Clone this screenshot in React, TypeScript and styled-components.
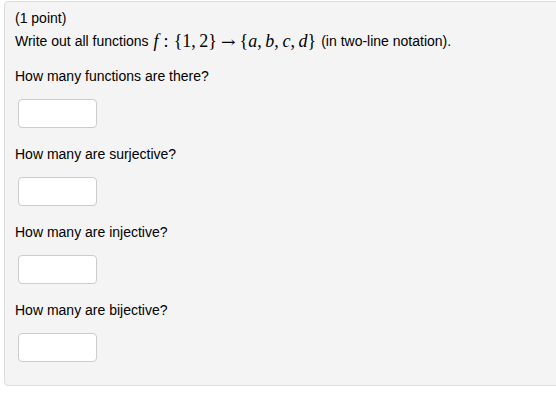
import React from "react";
import styled, { createGlobalStyle } from "styled-components";

const GlobalStyle = createGlobalStyle`
  body {
    margin: 0;
    background: #ffffff;
    font-family: "Liberation Sans", Arial, sans-serif;
    font-size: 14px;
    color: #000;
    overflow: hidden;
  }
`;

const Panel = styled.div`
  margin: 1px -20px 0 4px;
  padding: 9px 10px 23px 10px;
  background: #f4f4f4;
  border: 1px solid #dcdcdc;
  border-radius: 4px;
`;

const Line = styled.div`
  line-height: 15px;
`;

const ProblemLine = styled.div`
  display: flex;
  align-items: center;
  height: 22px;
  margin-top: 4px;
  white-space: nowrap;
`;

const Math = styled.span`
  font-family: "Liberation Serif", "Times New Roman", serif;
  font-size: 18px;
  margin: 0 5px 0 5px;
  display: inline-flex;
  align-items: baseline;
  white-space: pre;
`;

const Var = styled.i`
  font-style: italic;
`;

const Op = styled.span<{ $gap?: number }>`
  margin: 0 ${(p) => p.$gap ?? 4}px;
`;

const Arrow = styled.span`
  font-family: "DejaVu Serif", serif;
  font-size: 15px;
  margin: 0 5px;
  transform: scaleX(1.15);
  display: inline-block;
`;

const Question = styled.div<{ $top: number }>`
  line-height: 16px;
  margin-top: ${(p) => p.$top}px;
`;

const Answer = styled.input`
  display: block;
  margin: 15px 0 0 3px;
  width: 79px;
  height: 29px;
  box-sizing: border-box;
  border: 1px solid #cccccc;
  border-radius: 4px;
  background: #fff;
  outline: none;
`;

const questions = [
  "How many functions are there?",
  "How many are surjective?",
  "How many are injective?",
  "How many are bijective?",
];

const thin = "\u2009";

export default function App() {
  return (
    <>
      <GlobalStyle />
      <Panel>
        <Line>(1 point)</Line>
        <ProblemLine>
          Write out all functions
          <Math>
            <Var>f</Var>
            <Op $gap={5}>:</Op>
            {`{1,${thin}2}`}
            <Arrow>→</Arrow>
            {"{"}
            <Var>a</Var>,{thin}
            <Var>b</Var>,{thin}
            <Var>c</Var>,{thin}
            <Var>d</Var>
            {"}"}
          </Math>
          (in two-line notation).
        </ProblemLine>
        {questions.map((q, i) => (
          <React.Fragment key={q}>
            <Question $top={i === 0 ? 16 : 18}>{q}</Question>
            <Answer type="text" />
          </React.Fragment>
        ))}
      </Panel>
    </>
  );
}
